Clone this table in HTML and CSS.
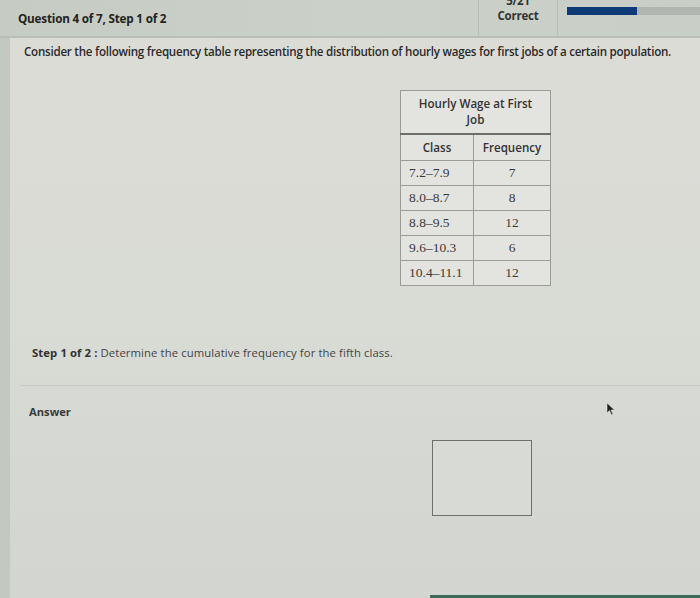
FILE: index.html
```html
<!DOCTYPE html>
<html>
<head>
<meta charset="utf-8">
<link rel="stylesheet" href="styles.css">
</head>
<body>
<header class="topbar">
  <div class="title">Question 4 of 7, Step 1 of 2</div>
  <div class="score">
    <div class="score-num">5/21</div>
    <div class="score-label">Correct</div>
  </div>
  <div class="progress"><div class="progress-fill"></div></div>
</header>
<div class="page">
  <main class="panel">
    <p class="prompt">Consider the following frequency table representing the distribution of hourly wages for first jobs of a certain population.</p>
    <table class="freq">
      <thead>
        <tr><th colspan="2" class="caption">Hourly Wage at First<br>Job</th></tr>
        <tr><th>Class</th><th>Frequency</th></tr>
      </thead>
      <tbody>
        <tr><td class="cls">7.2–7.9</td><td>7</td></tr>
        <tr><td class="cls">8.0–8.7</td><td>8</td></tr>
        <tr><td class="cls">8.8–9.5</td><td>12</td></tr>
        <tr><td class="cls">9.6–10.3</td><td>6</td></tr>
        <tr><td class="cls">10.4–11.1</td><td>12</td></tr>
      </tbody>
    </table>
    <p class="step"><b>Step 1 of 2 :</b> Determine the cumulative frequency for the fifth class.</p>
    <div class="answer-sec">
      <div class="answer-label">Answer</div>
      <div class="answer-box"></div>
      <svg class="cursor" width="10" height="14" viewBox="0 0 10 14"><path d="M1 1 L1 11 L3.5 8.5 L5.5 13 L7 12.3 L5 8 L8.5 8 Z" fill="#222" stroke="#ddd" stroke-width="0.6"/></svg>
    </div>
  </main>
</div>
<div class="bottom-strip"></div>
</body>
</html>
```
FILE: styles.css
```css
html, body {
  margin: 0;
  padding: 0;
  height: 598px;
  overflow: hidden;
}
body {
  background: #c3c8c0;
  font-family: "Open Sans", "Liberation Sans", sans-serif;
  color: #2c2c2c;
  position: relative;
}
.topbar {
  height: 38px;
  display: flex;
  align-items: stretch;
  background: linear-gradient(90deg, #c6ccc3 0%, #cbd1c8 50%, #c9cfc7 100%);
  border-bottom: 2px solid #b9beb6;
  box-sizing: border-box;
}
.title {
  padding-left: 18px;
  width: 460px;
  display: flex;
  align-items: center;
  font-weight: 700;
  font-size: 11.7px;
  color: #232323;
  letter-spacing: -0.2px;
}
.score {
  width: 78px;
  border-left: 1px solid #b8bdb5;
  border-right: 1px solid #b8bdb5;
  display: flex;
  flex-direction: column;
  align-items: center;
  font-weight: 700;
  font-size: 11.5px;
  color: #333;
  line-height: 14px;
  letter-spacing: -0.2px;
}
.score-num { margin-top: -6px; }
.score-label { margin-top: 1px; }
.progress {
  margin-left: 9px;
  margin-top: 7px;
  height: 8px;
  flex: 1;
  background: #b2b6b0;
}
.progress-fill {
  width: 70px;
  height: 100%;
  background: #0d3b78;
}
.page {
  padding-left: 10px;
}
.panel {
  background: linear-gradient(180deg, #dcdcd7 0%, #d9dbd5 50%, #d2d5d0 100%);
  height: 560px;
  padding: 1px 0 0 14px;
  box-sizing: border-box;
}
.prompt {
  margin: 5px 0 0 0;
  font-size: 11.6px;
  font-weight: 600;
  color: #2a2a2a;
  letter-spacing: -0.25px;
  line-height: 16px;
}
.freq {
  margin: 30px 0 0 376px;
  border-collapse: collapse;
  background: #e3e3df;
  border: 1.5px solid #8d8f8b;
}
.freq th {
  font-weight: 600;
  font-size: 11.6px;
  color: #333;
  height: 25px;
  padding: 0;
  border: 1px solid #9a9c98;
}
.freq th.caption {
  height: 42px;
  line-height: 16px;
  border-bottom: 2px solid #6c6e6a;
}
.freq td {
  font-family: "Liberation Serif", "Times New Roman", serif;
  font-size: 13.5px;
  color: #3a3a3a;
  height: 24px;
  padding: 0;
  text-align: center;
  border: 1px solid #9a9c98;
}
.freq td.cls {
  width: 72px;
  text-align: left;
  padding-left: 8px;
  box-sizing: border-box;
}
.freq th:first-child { width: 72px; }
.freq td:last-child, .freq tr:nth-child(2) th:last-child { width: 76px; }
.step {
  margin: 59px 0 0 8px;
  font-size: 11.3px;
  color: #444;
  letter-spacing: 0.1px;
}
.step b { font-weight: 700; color: #333; }
.answer-sec {
  position: relative;
  margin-top: 25px;
  margin-left: -4px;
  border-top: 1px solid #c8cac5;
  padding: 18px 0 0 9px;
}
.answer-label {
  font-size: 11.2px;
  font-weight: 700;
  color: #3a3a3a;
}
.answer-box {
  margin: 21px 0 0 403px;
  width: 98px;
  height: 74px;
  border: 1.5px solid #6e706c;
  background: #d8dad5;
}
.cursor {
  position: absolute;
  left: 586px;
  top: 16px;
}
.bottom-strip {
  position: absolute;
  left: 430px;
  right: 0;
  bottom: 0;
  height: 3px;
  background: #3d6b5a;
}
```
